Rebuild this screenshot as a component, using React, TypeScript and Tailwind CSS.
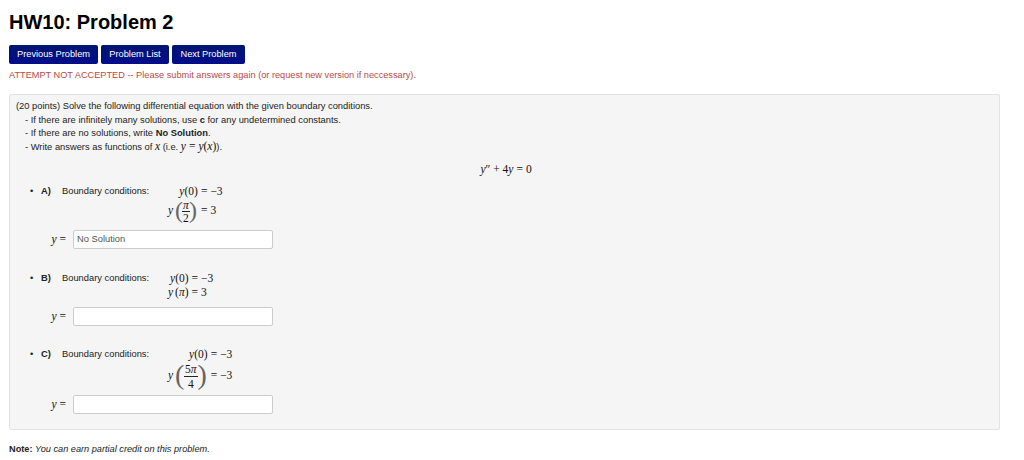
import React from 'react';

const sans = "font-['Liberation_Sans',Arial,sans-serif]";
const serif = "font-['Liberation_Serif','Times_New_Roman',serif]";

const M = ({ children }: { children: React.ReactNode }) => (
  <span className={`${serif} text-[11.5px] text-[#111]`}>{children}</span>
);
const V = ({ children }: { children: React.ReactNode }) => <i className={serif}>{children}</i>;
const Eq = () => <span className="mx-[3px]">=</span>;

const Frac = ({ top, bottom, big }: { top: React.ReactNode; bottom: React.ReactNode; big?: boolean }) => {
  const paren = big ? 'text-[28px] w-[7px]' : 'text-[24px] w-[6px]';
  const line = big ? 'leading-[14px]' : 'leading-[12px]';
  return (
    <span className="inline-flex items-center ml-[3px] mr-[2px]">
      <span className={`${paren} leading-none text-[#666] flex justify-center -mt-[3px]`}>(</span>
      <span className={`flex flex-col items-center ${big ? 'mx-[1px]' : ''}`}>
        <span className={`${line} px-[1px] border-b border-[#222]`}>{top}</span>
        <span className={line}>{bottom}</span>
      </span>
      <span className={`${paren} leading-none text-[#666] flex justify-center -mt-[3px]`}>)</span>
    </span>
  );
};

const Answer = ({ value, top }: { value?: string; top: string }) => (
  <div className={`flex items-center ${top}`}>
    <div className="w-[57px] pr-[4px] flex justify-end">
      <M><V>y</V><Eq /></M>
    </div>
    <input
      readOnly
      value={value ?? ''}
      className="w-[200px] h-[19px] bg-white border border-[#ccc] rounded-[2px] px-[3px] pb-[1px] text-[9.33px] text-[#555] outline-none"
    />
  </div>
);

const Row = ({ label, top, lines }: { label: string; top: string; lines: [React.ReactNode, React.ReactNode, string][] }) => (
  <div className={`flex pl-[14px] ${top}`}>
    <span className="w-[11px] leading-[13px]">•</span>
    <b className="w-[21px] leading-[13px]">{label}</b>
    <span className="w-[106px] leading-[13px]">Boundary conditions:</span>
    <div className={`${serif} grid grid-cols-[auto_auto] items-center text-[11.5px] text-[#111]`}>
      {lines.map(([left, right, h], i) => (
        <React.Fragment key={i}>
          <div className={`${h} flex items-center justify-end`}>{left}</div>
          <div className={`${h} flex items-center whitespace-pre`}>{right}</div>
        </React.Fragment>
      ))}
    </div>
  </div>
);

export default function App() {
  const buttons = [
    { label: 'Previous Problem', width: 'w-[89px]' },
    { label: 'Problem List', width: 'w-[68px]' },
    { label: 'Next Problem', width: 'w-[73px]' },
  ];

  return (
    <div className={`${sans} w-[1024px] h-[460px] bg-white overflow-hidden pl-[9px] pr-[24px] pt-[11px] text-[#222]`}>
      <h1 className="text-[20px] font-bold leading-[23px] text-black">HW10: Problem 2</h1>

      <div className="flex gap-[3px] mt-[11px]">
        {buttons.map((b) => (
          <button
            key={b.label}
            className={`${b.width} h-[19px] rounded-[2px] text-[9.25px] text-white bg-gradient-to-b from-[#001470] to-[#000c8c]`}
          >
            {b.label}
          </button>
        ))}
      </div>

      <p className="mt-[5px] text-[9.2px] leading-[12px] text-[#b94a48]">
        ATTEMPT NOT ACCEPTED -- Please submit answers again (or request new version if neccessary).
      </p>

      <div className="mt-[13px] h-[336px] bg-[#f5f5f5] border border-[#e3e3e3] rounded-[2px] pl-[6px] pt-[5px] text-[9.33px]">
        <p className="leading-[13px]">(20 points) Solve the following differential equation with the given boundary conditions.</p>
        <div className="pl-[9px] pt-[1px]">
          <p className="leading-[13px]">- If there are infinitely many solutions, use <b>c</b> for any undetermined constants.</p>
          <p className="leading-[13px]">- If there are no solutions, write <b>No Solution</b>.</p>
          <p className="leading-[13px]">- Write answers as functions of <M><V>x</V></M> (i.e. <M><V>y</V><Eq /><V>y</V>(<V>x</V>)</M>).</p>
        </div>

        <div className="flex justify-center mt-[8px] h-[14px] leading-[14px] -ml-[3px]">
          <M><V>y</V>″ + 4<V>y</V><Eq />0</M>
        </div>

        <Row
          label="A)"
          top="mt-[9px]"
          lines={[
            [<><V>y</V>(0)</>, <><Eq />−3</>, 'h-[13px]'],
            [<><V>y</V><Frac top={<V>π</V>} bottom="2" /></>, <><Eq />3</>, 'h-[26px]'],
          ]}
        />
        <Answer value="No Solution" top="mt-[6px]" />

        <Row
          label="B)"
          top="mt-[23px]"
          lines={[
            [<><V>y</V>(0)</>, <><Eq />−3</>, 'h-[14px]'],
            [<><V>y</V><span className="ml-[2px]">(<V>π</V>)</span></>, <><Eq />3</>, 'h-[14px]'],
          ]}
        />
        <Answer top="mt-[7px]" />

        <Row
          label="C)"
          top="mt-[22px]"
          lines={[
            [<><V>y</V>(0)</>, <><Eq />−3</>, 'h-[13px]'],
            [<><V>y</V><Frac big top={<>5<V>π</V></>} bottom="4" /></>, <><Eq />−3</>, 'h-[30px]'],
          ]}
        />
        <Answer top="mt-[4px]" />
      </div>

      <p className="mt-[13px] text-[9.2px] leading-[12px]">
        <b>Note:</b> <i>You can earn partial credit on this problem.</i>
      </p>
    </div>
  );
}
